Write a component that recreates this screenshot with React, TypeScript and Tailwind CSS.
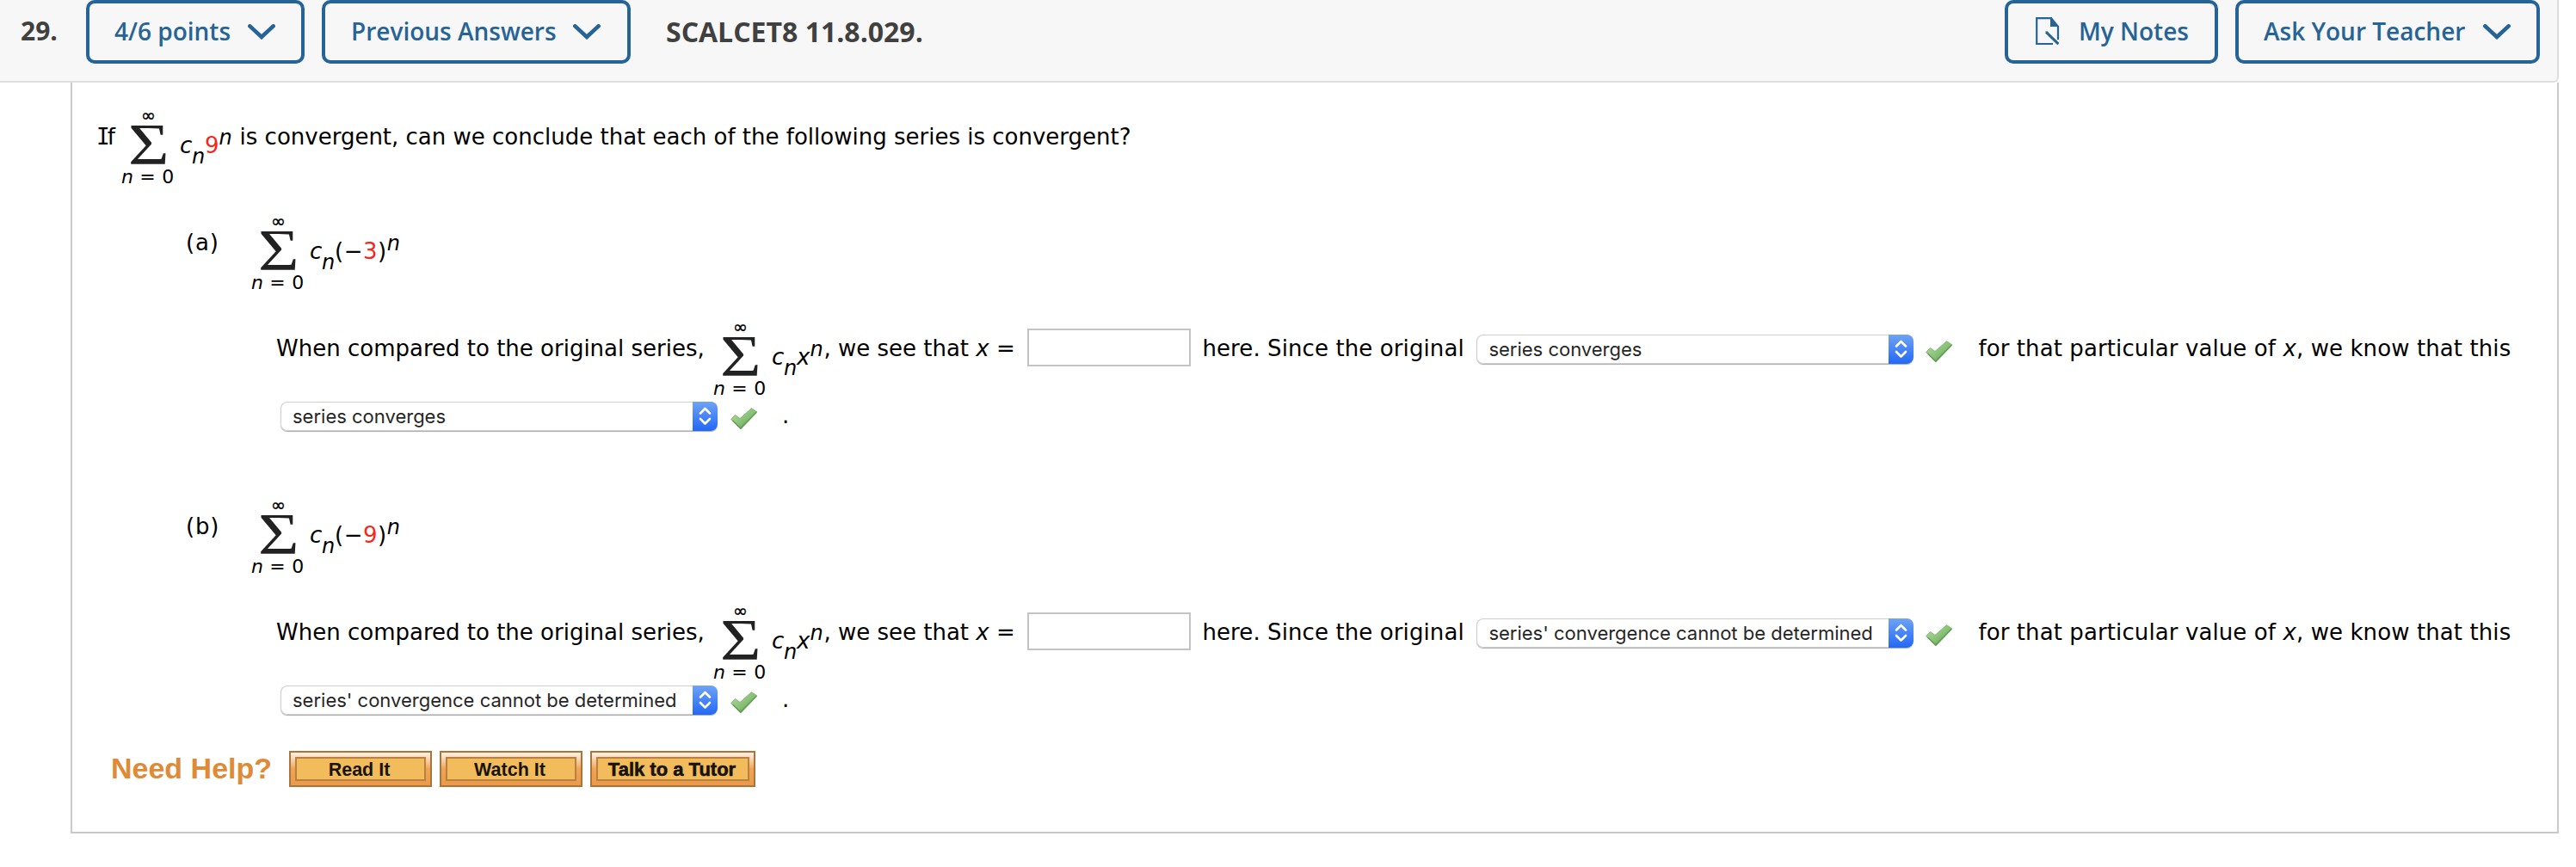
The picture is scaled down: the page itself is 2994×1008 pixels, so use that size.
import type { ReactNode } from "react";

type Part = {
  id: string;
  value: string;
  answer: string;
};

const PARTS: Part[] = [
  { id: "a", value: "3", answer: "series converges" },
  { id: "b", value: "9", answer: "series' convergence cannot be determined" },
];

const HELP = [
  { label: "Read It", box: "w-[166px]", text: "pr-[3px] text-[21.5px]" },
  { label: "Watch It", box: "w-[166px]", text: "pr-[3px] text-[21.5px]" },
  { label: "Talk to a Tutor", box: "w-[192px]", text: "pr-[2px] text-[22px] [-webkit-text-stroke:0.5px_black]" },
];

function Chevron({ className }: { className: string }) {
  return (
    <svg viewBox="0 0 32 18" className={`h-[18px] w-8 shrink-0 ${className}`} fill="none">
      <path d="M2.4 2.4 16 15 29.6 2.4" stroke="currentColor" strokeWidth="4.6" strokeLinecap="round" strokeLinejoin="miter" />
    </svg>
  );
}

function NoteIcon() {
  return (
    <svg viewBox="0 0 28 32" className="mt-4 h-8 w-7 shrink-0" fill="none">
      <path d="M20 31H1.2V1.2H18L26 11V26" stroke="currentColor" strokeWidth="2.2" />
      <path d="M17 1.2V11h9.8Z" fill="currentColor" />
      <path d="M12 17.2 26.4 31.2" stroke="currentColor" strokeWidth="3" />
      <path d="M11.3 16.2l3.6 1.6-1.8 1.8Z" fill="currentColor" />
    </svg>
  );
}

function HeaderButton({ className, children }: { className: string; children: ReactNode }) {
  return (
    <button
      className={`flex h-[74px] shrink-0 items-start rounded-[10px] border-4 border-[#266396] text-[28px] leading-[65px] font-semibold whitespace-nowrap text-[#266396] ${className}`}
    >
      {children}
    </button>
  );
}

function Sum() {
  return (
    <span className="flex w-[68px] shrink-0 flex-col">
      <span className="h-4 pl-[23px] text-[20px] leading-[16px] [-webkit-text-stroke:0.4px_black]">∞</span>
      <span className="ml-[8px] h-[52px] w-[40px] origin-left scale-x-[1.22] font-['Liberation_Serif',serif] text-[67px] leading-[50px] text-[#222]">
        Σ
      </span>
      <span className="text-[22px] leading-[24px] tracking-[0.2px] whitespace-nowrap">
        <i>n</i> = 0
      </span>
    </span>
  );
}

// c with its subscript, the base and the exponent
function Term({ children }: { children: ReactNode }) {
  return (
    <span className="flex shrink-0">
      <i className="mt-[23px] w-[14px]">c</i>
      <i className="mt-9 w-[15px] text-[24px]">n</i>
      <span className="mt-[23px]">{children}</span>
      <i className="mt-[14px] w-[16px] text-[24px]">n</i>
    </span>
  );
}

function Text({ className, children }: { className: string; children: ReactNode }) {
  return <span className={`mt-[13px] shrink-0 whitespace-nowrap ${className}`}>{children}</span>;
}

function Select({ value }: { value: string }) {
  return (
    <span className="flex h-[34px] w-[508px] shrink-0 overflow-hidden rounded-[8px] bg-white font-[Inter,sans-serif] shadow-[inset_0_0_0_1px_#cfcfcf,0_1px_1px_#a8a8a8]">
      <span className="grow pl-[14px] text-[22px] leading-[34px] whitespace-nowrap text-[#262626]">{value}</span>
      <svg viewBox="0 0 29 34" className="h-[34px] w-[29px]" fill="none">
        <defs>
          <linearGradient id="blue" x1="0" y1="0" x2="0" y2="1">
            <stop offset="0" stopColor="#6fa3f5" />
            <stop offset="1" stopColor="#2268f6" />
          </linearGradient>
        </defs>
        <rect width="29" height="34" fill="url(#blue)" />
        <path d="M9 13.5 14.5 8 20 13.5M9 20 14.5 25.5 20 20" stroke="white" strokeWidth="2.6" strokeLinecap="round" strokeLinejoin="round" />
      </svg>
    </span>
  );
}

function Check({ className }: { className: string }) {
  return (
    <svg viewBox="0 0 32 26" className={`h-[26px] w-8 shrink-0 ${className}`}>
      <defs>
        <linearGradient id="green" x1="0" y1="0" x2="1" y2="1">
          <stop offset="0.2" stopColor="#a5d394" />
          <stop offset="0.55" stopColor="#86bf74" />
          <stop offset="0.8" stopColor="#64a056" />
        </linearGradient>
      </defs>
      <path d="M0.7 13.5 5.5 8.5 11 12.5 24.5 0.7 31 5 11.8 25Z" fill="url(#green)" stroke="#82b874" strokeWidth="1" strokeLinejoin="round" />
      <path d="M2.5 15 11.8 24 30 5.5" fill="none" stroke="#4f8a46" strokeWidth="1.5" opacity="0.6" />
    </svg>
  );
}

function PartBlock({ part }: { part: Part }) {
  return (
    <section className="h-[330px]">
      <div className="flex h-[123px] pl-[132px]">
        <Text className="w-[76px] tracking-[0.8px]">({part.id})</Text>
        <Sum />
        <Term>
          <span className="tracking-[0.5px]">
            (−<span className="text-[#f5281e]">{part.value}</span>)
          </span>
        </Term>
      </div>
      <div className="flex h-[95px] pl-[237px]">
        <Text className="w-[508px]">When compared to the original series,</Text>
        <Sum />
        <Term>
          <i>x</i>
        </Term>
        <Text className="w-[237px]">
          , we see that <i>x</i> =
        </Text>
        <input className="mt-[10px] h-11 w-[190px] shrink-0 border-2 border-[#c4c4c4] bg-white" />
        <Text className="ml-[13px] w-[319px] tracking-[0.1px]">here. Since the original</Text>
        <span className="mt-[17px]">
          <Select value={part.answer} />
        </span>
        <Check className="mt-6 ml-[14px]" />
        <Text className="ml-[29px] tracking-[0.1px]">
          for that particular value of <i>x</i>, we know that this
        </Text>
      </div>
      <div className="flex pl-[242px]">
        <Select value={part.answer} />
        <Check className="mt-[7px] ml-[15px]" />
        <span className="mt-[-4px] ml-[28px]">.</span>
      </div>
    </section>
  );
}

export default function App() {
  return (
    <div className="h-[1008px] w-[2994px] overflow-hidden bg-white font-['DejaVu_Sans',sans-serif] text-[26px] leading-10 text-black">
      <header className="flex h-24 w-[2974px] rounded-br-[6px] border-r-2 border-b-2 border-[#dedede] bg-[#f7f7f7] pl-6 font-['Open_Sans',sans-serif]">
        <span className="w-[76px] text-[30px] leading-[71px] font-bold text-[#404040]">29.</span>
        <HeaderButton className="w-[254px] pl-[29px]">
          <span className="w-[155px] text-left">4/6 points</span>
          <Chevron className="mt-6" />
        </HeaderButton>
        <HeaderButton className="ml-5 w-[359px] pl-[30px]">
          <span className="w-[258px] text-left">Previous Answers</span>
          <Chevron className="mt-6" />
        </HeaderButton>
        <span className="ml-[41px] grow text-[32px] leading-[74px] font-bold text-[#404040]">SCALCET8 11.8.029.</span>
        <HeaderButton className="w-[248px] pl-8">
          <NoteIcon />
          <span className="ml-[22px]">My Notes</span>
        </HeaderButton>
        <HeaderButton className="mr-5 ml-5 w-[354px] pl-[29px]">
          <span className="w-[255px] text-left">Ask Your Teacher</span>
          <Chevron className="mt-6" />
        </HeaderButton>
      </header>
      <main className="ml-[82px] h-[873px] w-[2892px] border-2 border-t-0 border-[#c9c9c9] pt-[30px]">
        <div className="flex h-[123px] pl-[28px]">
          <Text className="w-[29px]">
            <span className="-mr-[3px] font-['DejaVu_Sans_Mono',monospace]">I</span>f
          </Text>
          <Sum />
          <Term>
            <span className="text-[#f5281e]">9</span>
          </Term>
          <Text className="ml-[8px]">is convergent, can we conclude that each of the following series is convergent?</Text>
        </div>
        {PARTS.map((part) => (
          <PartBlock key={part.id} part={part} />
        ))}
        <div className="-mt-9 flex gap-[9px] pl-[45px] font-['Liberation_Sans',sans-serif]">
          <span className="w-[198px] text-[34px] leading-[41px] font-bold whitespace-nowrap text-[#e08a36]">Need Help?</span>
          {HELP.map((h) => (
            <button
              key={h.label}
              className={`h-[42px] shrink-0 border-2 border-[#a8753a] bg-linear-to-b from-[#fdebd9] from-5% via-[#efa455] via-50% to-[#eb9a49] p-[5px] ${h.box}`}
            >
              <span className={`block h-7 border-2 border-[#b9813f] bg-[#f2bc5c] leading-[26px] font-bold whitespace-nowrap text-[#1a1408] ${h.text}`}>
                {h.label}
              </span>
            </button>
          ))}
        </div>
      </main>
    </div>
  );
}
